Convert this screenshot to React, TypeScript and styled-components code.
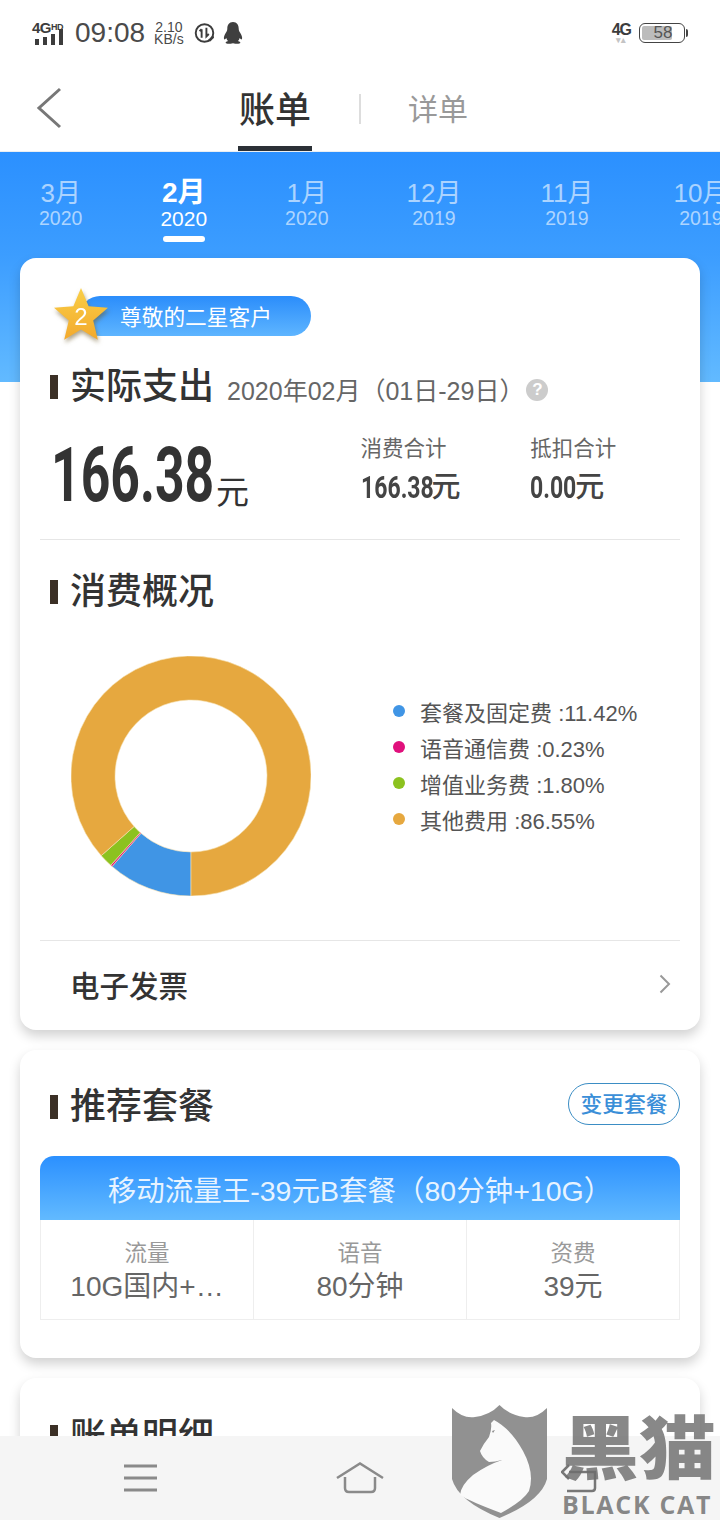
import React from "react";
import styled, { createGlobalStyle } from "styled-components";

const months = [
  { month: "3月", year: "2020" },
  { month: "2月", year: "2020", active: true },
  { month: "1月", year: "2020" },
  { month: "12月", year: "2019" },
  { month: "11月", year: "2019" },
  { month: "10月", year: "2019" },
];

const fees = [
  { label: "套餐及固定费", value: 11.42, color: "#4095e5" },
  { label: "语音通信费", value: 0.23, color: "#e0107c" },
  { label: "增值业务费", value: 1.8, color: "#8cc21f" },
  { label: "其他费用", value: 86.55, color: "#e6a83f" },
];

const planCells = [
  { label: "流量", value: "10G国内+…" },
  { label: "语音", value: "80分钟" },
  { label: "资费", value: "39元" },
];

function donutSlice(start: number, end: number, outer: number, inner: number) {
  const point = (pct: number, r: number) => {
    // the chart starts at six o'clock and runs clockwise
    const a = Math.PI + (pct / 100) * Math.PI * 2;
    return `${(120 + Math.sin(a) * r).toFixed(2)} ${(120 - Math.cos(a) * r).toFixed(2)}`;
  };
  const large = end - start > 50 ? 1 : 0;
  return `M${point(start, outer)} A${outer} ${outer} 0 ${large} 1 ${point(end, outer)} L${point(end, inner)} A${inner} ${inner} 0 ${large} 0 ${point(start, inner)} Z`;
}

const Donut = () => {
  let sum = 0;
  return (
    <svg width="240" height="240" viewBox="0 0 240 240">
      {fees.map((fee) => {
        const start = sum;
        sum += fee.value;
        return (
          <path
            key={fee.label}
            d={donutSlice(start, sum, 120, 76)}
            fill={fee.color}
            stroke="#f7e3b5"
            strokeWidth="0.6"
          />
        );
      })}
    </svg>
  );
};

const App = () => {
  return (
    <Screen>
      <GlobalStyle />
      <StatusBar>
        <StatusLeft>
          <Signal>
            <SignalText>
              4G<small>HD</small>
            </SignalText>
            <Bars>
              <Bar $h={6} />
              <Bar $h={8} />
              <Bar $h={11} />
              <Bar $h={16} />
            </Bars>
          </Signal>
          <Clock>09:08</Clock>
          <Speed>
            <span>2.10</span>
            <span>KB/s</span>
          </Speed>
          <svg width="21" height="22" viewBox="0 0 22 22">
            <circle cx="11" cy="11" r="9.2" fill="none" stroke="#3c3c3c" strokeWidth="2" />
            <path d="M8 7v9M8 7L5.8 9M13 5.5v9l2.5-2.5" fill="none" stroke="#3c3c3c" strokeWidth="2" />
            <path d="M14 19l6-6 1 3-4 4z" fill="#3c3c3c" />
          </svg>
          <svg width="20" height="22" viewBox="0 0 20 22">
            <path
              d="M10 0C6 0 4.300 3 4.300 6.500c0 1.500-.3 2.500-1.300 4C1.500 13 .5 15 1 17c.5 1 1.500 0 2.300-1 .3 1.200 1 2.200 1.700 3-1.500.5-2.500 1-2.300 2 .5 1 4 1 7.300.2 3.300.8 6.800.8 7.300-.2.200-1-.8-1.500-2.300-2 .7-.8 1.400-1.800 1.700-3 .8 1 1.800 2 2.300 1 .5-2-.5-4-2-6.500-1-1.500-1.300-2.500-1.300-4C15.700 3 14 0 10 0z"
              fill="#3f3f3f"
            />
          </svg>
        </StatusLeft>
        <StatusRight>
          <NetType>
            4G
            <NetArrows>▾▴</NetArrows>
          </NetType>
          <Battery>
            <BatteryFill />
            <BatteryText>58</BatteryText>
          </Battery>
        </StatusRight>
      </StatusBar>

      <NavBar>
        <BackButton>
          <svg width="26" height="42" viewBox="0 0 26 42">
            <path d="M24 2L3 21l21 19" fill="none" stroke="#777" strokeWidth="3" />
          </svg>
        </BackButton>
        <NavTab $active>账单</NavTab>
        <NavDivider />
        <NavTab>详单</NavTab>
      </NavBar>

      <MonthBand>
        {months.map((m) => (
          <MonthItem key={m.month} $active={m.active}>
            <MonthName $active={m.active}>{m.month}</MonthName>
            <MonthYear $active={m.active}>{m.year}</MonthYear>
            {m.active && <MonthBar />}
          </MonthItem>
        ))}
      </MonthBand>

      <Cards>
        <SummaryCard>
          <Badge>
            <Star>
              <svg width="56" height="56" viewBox="0 0 56 56">
                <defs>
                  <linearGradient id="star" x1="0" y1="0" x2="0" y2="1">
                    <stop offset="0" stopColor="#f9cf47" />
                    <stop offset="1" stopColor="#f3a92c" />
                  </linearGradient>
                </defs>
                <path
                  d="M28 1l7.600 18.300 19.400 1.500-14.800 12.700 4.600 19.300L28 42.400 11.200 52.800l4.600-19.300L1 20.800l19.400-1.500z"
                  fill="url(#star)"
                />
              </svg>
              <StarNumber>2</StarNumber>
            </Star>
            尊敬的二星客户
          </Badge>

          <HeadingRow>
            <Heading>实际支出</Heading>
            <DateRange>2020年02月（01日-29日）</DateRange>
            <Help>?</Help>
          </HeadingRow>

          <AmountRow>
            <Total>
              <TotalNumber>166.38</TotalNumber>
              <TotalUnit>元</TotalUnit>
            </Total>
            <SubAmount $width={170}>
              <SubLabel>消费合计</SubLabel>
              <SubValue>
                <SubNumber $width={71}>166.38</SubNumber>元
              </SubValue>
            </SubAmount>
            <SubAmount $width={150}>
              <SubLabel>抵扣合计</SubLabel>
              <SubValue>
                <SubNumber $width={45}>0.00</SubNumber>元
              </SubValue>
            </SubAmount>
          </AmountRow>

          <OverviewSection>
            <Heading>消费概况</Heading>
            <ChartRow>
              <Donut />
              <Legend>
                {fees.map((fee) => (
                  <LegendRow key={fee.label}>
                    <Dot $color={fee.color} />
                    {fee.label} :{fee.value.toFixed(2)}%
                  </LegendRow>
                ))}
              </Legend>
            </ChartRow>
          </OverviewSection>

          <InvoiceRow>
            电子发票
            <svg width="12" height="20" viewBox="0 0 12 20">
              <path d="M1.500 1.500L10 10l-8.500 8.500" fill="none" stroke="#999" strokeWidth="2" />
            </svg>
          </InvoiceRow>
        </SummaryCard>

        <PlanCard>
          <PlanHeading>
            <Heading>推荐套餐</Heading>
            <ChangeButton>变更套餐</ChangeButton>
          </PlanHeading>
          <PlanTitle>移动流量王-39元B套餐（80分钟+10G）</PlanTitle>
          <PlanTable>
            {planCells.map((cell) => (
              <PlanCell key={cell.label}>
                <PlanLabel>{cell.label}</PlanLabel>
                <PlanValue>{cell.value}</PlanValue>
              </PlanCell>
            ))}
          </PlanTable>
        </PlanCard>

        <DetailCard>
          <Heading>账单明细</Heading>
        </DetailCard>
      </Cards>

      <BottomBar>
        <svg width="34" height="28" viewBox="0 0 34 28">
          <path d="M0 2h33M0 14h33M0 26h33" stroke="#8a8a8a" strokeWidth="3" />
        </svg>
        <svg width="48" height="32" viewBox="0 0 48 32">
          <path d="M1 16L24 1.500 47 16" fill="none" stroke="#8a8a8a" strokeWidth="2.500" />
          <path d="M9 15v11q0 4 4 4h22q4 0 4-4V15" fill="none" stroke="#8a8a8a" strokeWidth="2.500" />
        </svg>
        <svg width="36" height="30" viewBox="0 0 36 30">
          <path d="M8 9h26v16q0 3-3 3H6M8 2L1 9l7 7" fill="none" stroke="#777" strokeWidth="2.500" />
        </svg>
      </BottomBar>

      <Watermark>
        <svg width="98" height="115" viewBox="0 0 98 115">
          <path
            d="M1 3Q12 14 24 12 39 10 48.500 0 58 10 73 12 85 14 96 3V74Q90 96 48.500 113 7 96 1 74Z"
            fill="#8b8b8b"
            fillOpacity="0.95"
          />
          <path
            d="M43 15Q60 24 72 46 84 68 78 86 72 96 50 108 18 96 9 90 10 80 22 70 36 60 51 55 44 57 38 57 31 53 29 46 33 38 38 32 41 24 40 18 41 17Z"
            fill="#fafafa"
          />
          <path d="M41 26l3-1-2 3z" fill="#8b8b8b" />
        </svg>
        <WatermarkText>
          <WatermarkName>黑猫</WatermarkName>
          <WatermarkLatin>BLACK CAT</WatermarkLatin>
        </WatermarkText>
      </Watermark>
    </Screen>
  );
};

export default App;

const GlobalStyle = createGlobalStyle`
  html, body {
    margin: 0;
    padding: 0;
    background: #fff;
  }
  * {
    box-sizing: border-box;
  }
`;

const Screen = styled.div`
  position: relative;
  width: 720px;
  height: 1520px;
  overflow: hidden;
  background: #fff;
  color: #333;
  font-family: "Liberation Sans", "Noto Sans CJK SC", sans-serif;
`;

const StatusBar = styled.div`
  display: flex;
  justify-content: space-between;
  align-items: center;
  height: 66px;
  padding: 0 35px 0 32px;
`;

const StatusLeft = styled.div`
  display: flex;
  align-items: center;
  gap: 8px;
`;

const StatusRight = styled.div`
  display: flex;
  align-items: center;
  gap: 8px;
`;

const Signal = styled.div`
  display: flex;
  flex-direction: column;
  width: 34px;
`;

const SignalText = styled.div`
  font-size: 15px;
  font-weight: 700;
  line-height: 12px;
  letter-spacing: -0.5px;
  color: #3c3c3c;
  white-space: nowrap;
  small {
    font-size: 9px;
    vertical-align: 3px;
  }
`;

const Bars = styled.div`
  display: flex;
  align-items: flex-end;
  justify-content: space-between;
  height: 10px;
  margin-top: 1px;
  padding: 0 3px;
`;

const Bar = styled.span<{ $h: number }>`
  width: 4px;
  height: ${(p) => p.$h}px;
  background: #3c3c3c;
`;

const Clock = styled.div`
  margin-left: 1px;
  font-size: 28px;
  color: #4a4a4a;
  line-height: 32px;
`;

const Speed = styled.div`
  display: flex;
  flex-direction: column;
  align-items: center;
  font-size: 14px;
  line-height: 12px;
  color: #4a4a4a;
  margin: 0 2px 0 1px;
`;

const NetType = styled.div`
  display: flex;
  flex-direction: column;
  align-items: center;
  font-size: 16px;
  font-weight: 700;
  line-height: 15px;
  letter-spacing: -1px;
  color: #3c3c3c;
`;

const NetArrows = styled.span`
  font-size: 9px;
  line-height: 7px;
  color: #c4c4c4;
  letter-spacing: 0;
`;

const Battery = styled.div`
  position: relative;
  display: flex;
  align-items: center;
  justify-content: center;
  width: 46px;
  height: 20px;
  border: 1px solid #444;
  border-radius: 6px;
  padding: 2px;
  &::after {
    content: "";
    position: absolute;
    right: -4px;
    top: 5px;
    width: 2px;
    height: 8px;
    background: #444;
    border-radius: 0 2px 2px 0;
  }
`;

const BatteryFill = styled.div`
  position: absolute;
  left: 2px;
  top: 2px;
  bottom: 2px;
  width: 30px;
  background: #bcbcbc;
  border-radius: 2px;
`;

const BatteryText = styled.span`
  position: relative;
  font-size: 17px;
  line-height: 16px;
  color: #555;
  padding-left: 2px;
`;

const NavBar = styled.div`
  position: relative;
  display: flex;
  align-items: center;
  height: 86px;
  padding-left: 238px;
  border-bottom: 1px solid #e9eef2;
`;

const BackButton = styled.div`
  position: absolute;
  left: 36px;
  top: 21px;
  line-height: 0;
`;

const NavTab = styled.div<{ $active?: boolean }>`
  position: relative;
  display: flex;
  align-items: center;
  justify-content: center;
  height: 85px;
  width: ${(p) => (p.$active ? 74 : 58)}px;
  font-size: ${(p) => (p.$active ? 36 : 30)}px;
  font-weight: ${(p) => (p.$active ? 500 : 400)};
  color: ${(p) => (p.$active ? "#333" : "#999")};
  padding-bottom: 4px;
  white-space: nowrap;
  ${(p) =>
    p.$active &&
    `&::after {
      content: "";
      position: absolute;
      left: 0;
      right: 0;
      bottom: 0;
      height: 5px;
      background: #2b3036;
    }`}
`;

const NavDivider = styled.div`
  width: 2px;
  height: 30px;
  background: #ddd;
  margin: 0 48px 0 47px;
`;

const MonthBand = styled.div`
  display: flex;
  align-items: flex-start;
  gap: 78px;
  height: 230px;
  padding: 26px 0 0 39px;
  overflow: hidden;
  background: linear-gradient(180deg, #2b90ff 0%, #3c9dff 45%, #62baff 100%);
`;

const MonthItem = styled.div<{ $active?: boolean }>`
  display: flex;
  flex-direction: column;
  align-items: center;
  flex: none;
  color: ${(p) => (p.$active ? "#fff" : "rgba(255, 255, 255, 0.6)")};
  &:nth-child(5) {
    margin-left: 1px;
  }
  &:nth-child(6) {
    margin-left: 2px;
  }
`;

const MonthName = styled.div<{ $active?: boolean }>`
  font-size: ${(p) => (p.$active ? 28 : 26)}px;
  font-weight: ${(p) => (p.$active ? 700 : 400)};
  line-height: 30px;
`;

const MonthYear = styled.div<{ $active?: boolean }>`
  font-size: ${(p) => (p.$active ? 21 : 19.5)}px;
  line-height: 22px;
  margin-top: ${(p) => (p.$active ? 0 : -1)}px;
`;

const MonthBar = styled.div`
  width: 42px;
  height: 6px;
  margin-top: 6px;
  background: #fff;
  border-radius: 3px;
`;

const Cards = styled.div`
  position: relative;
  display: flex;
  flex-direction: column;
  gap: 20px;
  margin-top: -124px;
  padding: 0 20px;
`;

const Card = styled.section`
  background: #fff;
  border-radius: 16px;
  box-shadow: 0 6px 12px rgba(0, 0, 0, 0.18);
  padding: 0 20px;
`;

const SummaryCard = styled(Card)`
  height: 772px;
  padding-top: 38px;
`;

const Badge = styled.div`
  position: relative;
  display: flex;
  align-items: center;
  width: 231px;
  height: 40px;
  margin-left: 40px;
  padding: 0 0 2px 40px;
  border-radius: 20px;
  background: linear-gradient(180deg, #2b8dfb 0%, #5eb5ff 100%);
  color: #fff;
  font-size: 21.700px;
  white-space: nowrap;
`;

const Star = styled.div`
  position: absolute;
  left: -27px;
  top: -9px;
  width: 56px;
  height: 56px;
  line-height: 0;
  filter: drop-shadow(1px 3px 2px rgba(110, 90, 40, 0.55));
`;

const StarNumber = styled.span`
  position: absolute;
  left: 0;
  right: 0;
  top: 30px;
  text-align: center;
  font-size: 24px;
  line-height: 0;
  color: #fff;
`;

const Heading = styled.h2`
  position: relative;
  margin: 0;
  padding-left: 30px;
  font-size: 36px;
  font-weight: 500;
  line-height: 46px;
  color: #333;
  white-space: nowrap;
  &::before {
    content: "";
    position: absolute;
    left: 10px;
    top: 11px;
    width: 8px;
    height: 24px;
    background: #3b3026;
  }
`;

const HeadingRow = styled.div`
  display: flex;
  align-items: center;
  margin-top: 28px;
`;

const DateRange = styled.span`
  margin: 3px 0 0 13px;
  font-size: 25px;
  color: #666;
  white-space: nowrap;
`;

const Help = styled.span`
  display: flex;
  align-items: center;
  justify-content: center;
  width: 22px;
  height: 22px;
  margin: 6px 0 0 2px;
  border-radius: 50%;
  background: #ccc;
  color: #fff;
  font-size: 17px;
  font-weight: 700;
`;

const AmountRow = styled.div`
  display: flex;
  align-items: flex-start;
  height: 130px;
  padding-top: 24px;
  border-bottom: 1px solid #e6e6e6;
`;

const Total = styled.div`
  display: flex;
  align-items: flex-end;
  width: 321px;
  margin-top: 8px;
  padding-left: 11px;
`;

const TotalNumber = styled.span`
  display: block;
  width: 165px;
  font-family: Roboto, "Liberation Sans", sans-serif;
  font-size: 76px;
  font-weight: 700;
  line-height: 66px;
  color: #333;
  transform: scaleX(0.68);
  transform-origin: left center;
  white-space: nowrap;
`;

const TotalUnit = styled.span`
  font-size: 33px;
  line-height: 36px;
  margin-bottom: -3px;
  color: #333;
`;

const SubAmount = styled.div<{ $width: number }>`
  width: ${(p) => p.$width}px;
`;

const SubLabel = styled.div`
  font-size: 21.500px;
  line-height: 30px;
  color: #666;
`;

const SubValue = styled.div`
  display: flex;
  margin-top: 4px;
  font-size: 29px;
  line-height: 38px;
  font-weight: 500;
  color: #444;
`;

const SubNumber = styled.span<{ $width: number }>`
  display: block;
  width: ${(p) => p.$width}px;
  font-family: Roboto, "Liberation Sans", sans-serif;
  font-size: 32px;
  font-weight: 700;
  transform: scaleX(0.72);
  transform-origin: left center;
  white-space: nowrap;
`;

const OverviewSection = styled.div`
  height: 401px;
  padding-top: 29px;
  border-bottom: 1px solid #e6e6e6;
`;

const ChartRow = styled.div`
  display: flex;
  align-items: center;
  margin-top: 41px;
  padding-left: 31px;
`;

const Legend = styled.div`
  display: flex;
  flex-direction: column;
  gap: 6px;
  margin-left: 82px;
  margin-top: -23px;
`;

const LegendRow = styled.div`
  display: flex;
  align-items: center;
  height: 30px;
  font-size: 22px;
  color: #555;
  white-space: pre;
`;

const Dot = styled.span<{ $color: string }>`
  width: 12px;
  height: 12px;
  margin-right: 15px;
  border-radius: 50%;
  background: ${(p) => p.$color};
`;

const InvoiceRow = styled.div`
  display: flex;
  align-items: center;
  justify-content: space-between;
  height: 90px;
  padding: 0 9px 4px 30px;
  font-size: 29.500px;
  font-weight: 500;
  color: #333;
`;

const PlanCard = styled(Card)`
  height: 308px;
  padding-top: 33px;
`;

const PlanHeading = styled.div`
  display: flex;
  align-items: center;
  justify-content: space-between;
`;

const ChangeButton = styled.button`
  width: 112px;
  height: 42px;
  margin-bottom: 6px;
  padding: 0 0 4px;
  border: 1px solid #3b8dc4;
  border-radius: 21px;
  background: #fff;
  color: #3b8fd8;
  font-family: inherit;
  font-size: 21.800px;
  font-weight: 500;
  white-space: nowrap;
`;

const PlanTitle = styled.div`
  display: flex;
  align-items: center;
  justify-content: center;
  height: 64px;
  margin-top: 25px;
  border-radius: 14px 14px 0 0;
  background: linear-gradient(180deg, #2b90ff 0%, #62baff 100%);
  color: rgba(255, 255, 255, 0.88);
  font-size: 28.500px;
  white-space: nowrap;
`;

const PlanTable = styled.div`
  display: grid;
  grid-template-columns: 212px 213px 1fr;
  height: 100px;
  border: 1px solid #eee;
  border-top: none;
`;

const PlanCell = styled.div`
  display: flex;
  flex-direction: column;
  align-items: center;
  padding-top: 18px;
  & + & {
    border-left: 1px solid #eee;
  }
`;

const PlanLabel = styled.div`
  font-size: 22.500px;
  line-height: 32px;
  color: #999;
`;

const PlanValue = styled.div`
  font-size: 28px;
  line-height: 34px;
  color: #666;
  white-space: nowrap;
`;

const DetailCard = styled(Card)`
  height: 160px;
  padding-top: 36px;
`;

const BottomBar = styled.div`
  position: absolute;
  left: 0;
  right: 0;
  bottom: 0;
  display: flex;
  align-items: center;
  justify-content: space-between;
  height: 84px;
  padding: 0 123px 0 124px;
  background: #f5f5f5;
`;

const Watermark = styled.div`
  position: absolute;
  left: 451px;
  top: 1405px;
  display: flex;
  width: 269px;
  height: 115px;
`;

const WatermarkText = styled.div`
  display: flex;
  flex-direction: column;
  width: 155px;
  margin-left: 13px;
  color: rgba(110, 110, 110, 0.82);
`;

const WatermarkName = styled.div`
  height: 76px;
  margin-top: 10px;
  font-size: 77px;
  font-weight: 900;
  line-height: 76px;
  white-space: nowrap;
  transform: scaleY(0.9);
  transform-origin: center top;
`;

const WatermarkLatin = styled.div`
  font-family: "Open Sans", "Liberation Sans", sans-serif;
  font-size: 25px;
  font-weight: 700;
  line-height: 26px;
  letter-spacing: 1.700px;
  white-space: nowrap;
`;
